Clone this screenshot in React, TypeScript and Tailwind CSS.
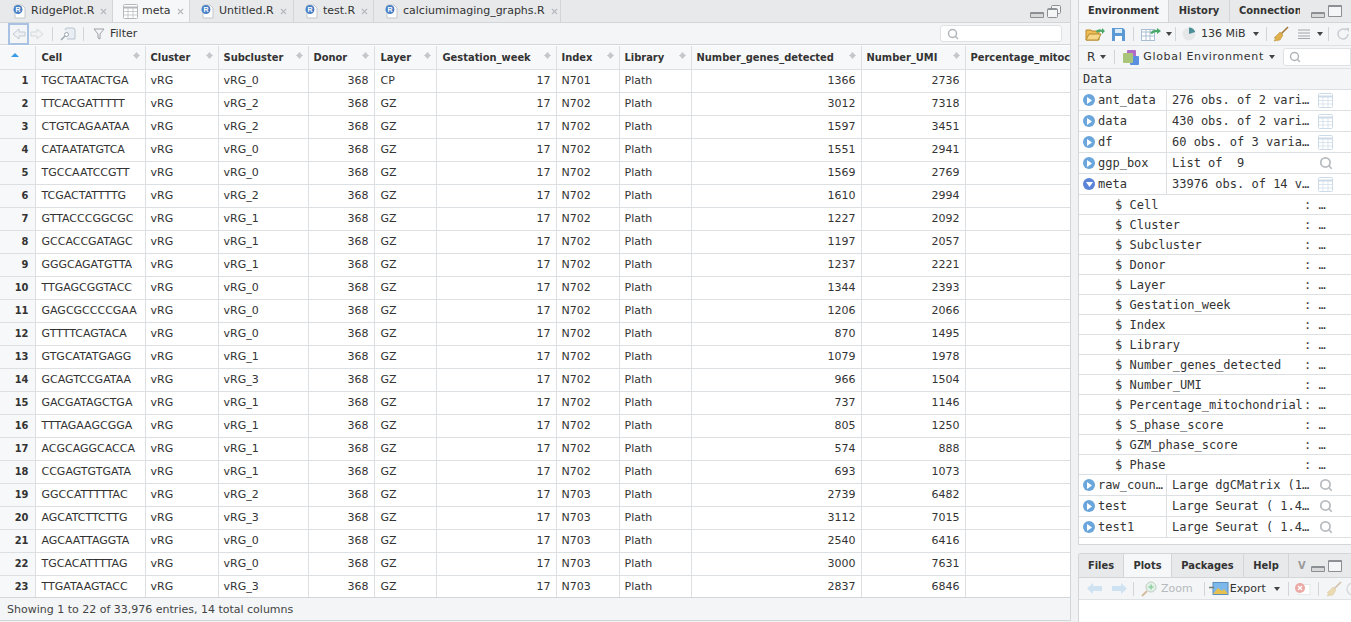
import React from 'react';
import { Search, X } from 'lucide-react';

const sans = "font-['DejaVu_Sans',sans-serif]";
const boldFont = "font-['DejaVu_Sans_Condensed','DejaVu_Sans',sans-serif] font-bold";

// cell, subcluster, index, genes, umi
const rows: [string, string, string, number, number][] = [
  ['TGCTAATACTGA', 'vRG_0', 'N701', 1366, 2736],
  ['TTCACGATTTTT', 'vRG_2', 'N702', 3012, 7318],
  ['CTGTCAGAATAA', 'vRG_2', 'N702', 1597, 3451],
  ['CATAATATGTCA', 'vRG_0', 'N702', 1551, 2941],
  ['TGCCAATCCGTT', 'vRG_0', 'N702', 1569, 2769],
  ['TCGACTATTTTG', 'vRG_2', 'N702', 1610, 2994],
  ['GTTACCCGGCGC', 'vRG_1', 'N702', 1227, 2092],
  ['GCCACCGATAGC', 'vRG_1', 'N702', 1197, 2057],
  ['GGGCAGATGTTA', 'vRG_1', 'N702', 1237, 2221],
  ['TTGAGCGGTACC', 'vRG_0', 'N702', 1344, 2393],
  ['GAGCGCCCCGAA', 'vRG_0', 'N702', 1206, 2066],
  ['GTTTTCAGTACA', 'vRG_0', 'N702', 870, 1495],
  ['GTGCATATGAGG', 'vRG_1', 'N702', 1079, 1978],
  ['GCAGTCCGATAA', 'vRG_3', 'N702', 966, 1504],
  ['GACGATAGCTGA', 'vRG_1', 'N702', 737, 1146],
  ['TTTAGAAGCGGA', 'vRG_1', 'N702', 805, 1250],
  ['ACGCAGGCACCA', 'vRG_1', 'N702', 574, 888],
  ['CCGAGTGTGATA', 'vRG_1', 'N702', 693, 1073],
  ['GGCCATTTTTAC', 'vRG_2', 'N703', 2739, 6482],
  ['AGCATCTTCTTG', 'vRG_3', 'N703', 3112, 7015],
  ['AGCAATTAGGTA', 'vRG_0', 'N703', 2540, 6416],
  ['TGCACATTTTAG', 'vRG_0', 'N703', 3000, 7631],
  ['TTGATAAGTACC', 'vRG_3', 'N703', 2837, 6846],
];

const columns: { label: string; w: number }[] = [
  { label: '', w: 35 },
  { label: 'Cell', w: 110 },
  { label: 'Cluster', w: 73 },
  { label: 'Subcluster', w: 90 },
  { label: 'Donor', w: 66 },
  { label: 'Layer', w: 62 },
  { label: 'Gestation_week', w: 120 },
  { label: 'Index', w: 63 },
  { label: 'Library', w: 72 },
  { label: 'Number_genes_detected', w: 170 },
  { label: 'Number_UMI', w: 104 },
  { label: 'Percentage_mitochondrial', w: 106 },
];

const RFile = () => (
  <svg width="15" height="15" viewBox="0 0 15 15" className="shrink-0">
    <path d="M3 1h7l3 3v10H3z" fill="#fff" stroke="#c4c8cc" />
    <circle cx="6" cy="5.5" r="4.5" fill="#4a80c4" />
    <text x="6" y="8" fontSize="7" fontWeight="700" textAnchor="middle" fill="#fff" fontFamily="Liberation Sans">R</text>
  </svg>
);

const GridIcon = ({ size = 15, color = '#cddbe8' }: { size?: number; color?: string }) => (
  <svg width={size} height={size} viewBox="0 0 15 15" className="shrink-0">
    <rect x="0.5" y="0.5" width="14" height="14" rx="1" fill="#fff" stroke={color} />
    <path d="M0.5 3.5h14" stroke={color} strokeWidth="2" />
    <path d="M5 4v10M10 4v10M1 7.5h13M1 11h13" stroke={color} strokeWidth="0.7" />
  </svg>
);

const Minimize = () => (
  <span className="w-[14px] h-[6px] mt-[7px] bg-[#d6d8da] border border-[#8c9094] rounded-[1px] border-t-[2px] shrink-0" />
);

const WinButtons = () => (
  <div className="flex items-center gap-[3px] shrink-0">
    <Minimize />
    <span className="w-[14px] h-[12px] bg-[#f4f5f6] border border-[#8c9094] border-t-[2px] rounded-[1px]" />
  </div>
);

const RestoreButtons = () => (
  <div className="flex items-center gap-[3px] shrink-0">
    <Minimize />
    <svg width="14" height="13" viewBox="0 0 14 13" className="shrink-0">
      <rect x="4.5" y="0.5" width="9" height="8" rx="1" fill="#f4f5f6" stroke="#8c9094" />
      <rect x="0.5" y="3.5" width="10" height="9" rx="1" fill="#f4f5f6" stroke="#8c9094" />
      <path d="M1 4.500h9" stroke="#8c9094" />
    </svg>
  </div>
);

const EditorTab = ({ name, w, active, grid, first }: { name: string; w: number; active?: boolean; grid?: boolean; first?: boolean }) => (
  <div
    className={`h-full flex items-center gap-[4px] border-r border-[#d3d6d9] shrink-0 ${first ? 'pl-[12px]' : 'pl-[10px]'} ${active ? 'bg-[#f6f7f8]' : ''}`}
    style={{ width: w }}
  >
    {grid ? <GridIcon color="#b4b8bc" /> : <RFile />}
    <span className="text-[11px] text-[#333] whitespace-nowrap pt-[1px]">{name}</span>
    <X size={9} className="text-[#b5b9bd] ml-[1px]" strokeWidth={3} />
  </div>
);

const Sorter = () => (
  <span className="flex flex-col -space-y-[1px] text-[#c4c8cc] shrink-0 mb-[6px]">
    <svg width="7" height="4" viewBox="0 0 7 4"><path d="M3.5 0 7 4H0z" fill="currentColor" /></svg>
    <svg width="7" height="4" viewBox="0 0 7 4"><path d="M0 0h7L3.5 4z" fill="currentColor" /></svg>
  </span>
);

const Table = () => (
  <table className="table-fixed border-collapse w-[1071px] text-[11px] text-[#333] [&_td]:pt-[2px] [&_th]:pt-[2px]">
    <colgroup>
      {columns.map(c => <col key={c.label} style={{ width: c.w }} />)}
    </colgroup>
    <thead>
      <tr className="h-[23px] bg-[#f7f8f9]">
        {columns.map((c, i) => (
          <th key={c.label} className={`border-r border-b border-[#dce0e3] pr-[5px] text-left overflow-hidden whitespace-nowrap ${i === 1 || i === 5 || i === 6 ? 'pl-[6px]' : 'pl-[5px]'} ${boldFont}`}>
            {i === 0 ? (
              <div className="flex justify-center pr-[4px] pb-[7px]">
                <svg width="8" height="4" viewBox="0 0 8 4"><path d="M4 0 8 4H0z" fill="#3a9be8" /></svg>
              </div>
            ) : i === 11 ? c.label : (
              <div className="flex items-center justify-between">
                <span>{c.label}</span>
                <Sorter />
              </div>
            )}
          </th>
        ))}
      </tr>
    </thead>
    <tbody>
      {rows.map((r, i) => (
        <tr key={r[0]} className="h-[23px] bg-white">
          <td className={`border-r border-b border-[#dce0e3] bg-[#f7f8f9] text-right pr-[6px] ${boldFont}`}>{i + 1}</td>
          <td className="border-r border-b border-[#dce0e3] pl-[6px] pr-[5px] overflow-hidden whitespace-nowrap">{r[0]}</td>
          <td className="border-r border-b border-[#dce0e3] px-[5px]">vRG</td>
          <td className="border-r border-b border-[#dce0e3] px-[5px]">{r[1]}</td>
          <td className="border-r border-b border-[#dce0e3] px-[5px] text-right">368</td>
          <td className="border-r border-b border-[#dce0e3] pl-[6px] pr-[5px]">{i === 0 ? 'CP' : 'GZ'}</td>
          <td className="border-r border-b border-[#dce0e3] px-[5px] text-right">17</td>
          <td className="border-r border-b border-[#dce0e3] px-[5px]">{r[2]}</td>
          <td className="border-r border-b border-[#dce0e3] px-[5px]">Plath</td>
          <td className="border-r border-b border-[#dce0e3] px-[5px] text-right">{r[3]}</td>
          <td className="border-r border-b border-[#dce0e3] px-[5px] text-right">{r[4]}</td>
          <td className="border-b border-[#dce0e3]" />
        </tr>
      ))}
    </tbody>
  </table>
);

const EnvRow = ({ name, value, icon, open }: { name: string; value: string; icon: 'grid' | 'search'; open?: boolean }) => (
  <div className="h-[21px] flex border-b border-[#dce0e3] bg-white font-['DejaVu_Sans_Mono',monospace] text-[12px] text-[#333] shrink-0">
    <div className="w-[88px] flex items-center gap-[3px] pl-[4px] border-r border-[#dce0e3] shrink-0 overflow-hidden">
      <span className={`w-[12px] h-[12px] rounded-full flex items-center justify-center shrink-0 ${open ? 'bg-[#5b84d8]' : 'bg-[#6aa6dc]'}`}>
        {open ? (
          <svg width="7" height="5" viewBox="0 0 7 5"><path d="M0 0h7L3.5 5z" fill="#fff" /></svg>
        ) : (
          <svg width="5" height="7" viewBox="0 0 5 7"><path d="M0 0l5 3.5L0 7z" fill="#fff" /></svg>
        )}
      </span>
      <span className="whitespace-nowrap">{name}</span>
    </div>
    <div className="flex items-center pl-[5px] whitespace-pre w-[150px] shrink-0 overflow-hidden">{value}</div>
    <div className="flex items-center justify-center w-[15px] ml-[1px]">
      {icon === 'grid' ? <GridIcon /> : <Search size={14} strokeWidth={3} className="text-[#b8bcc0]" />}
    </div>
  </div>
);

const VarRow = ({ name }: { name: string }) => (
  <div className="h-[20px] flex items-center border-b border-[#dce0e3] bg-white font-['DejaVu_Sans_Mono',monospace] text-[12px] text-[#333] pl-[36px] shrink-0 whitespace-pre">
    <span className="w-[189px] shrink-0">$ {name}</span>
    <span>: …</span>
  </div>
);

const Sep = ({ className = '' }: { className?: string }) => <span className={`w-px h-[14px] bg-[#d2d5d8] shrink-0 ${className}`} />;
const Caret = ({ className = '' }: { className?: string }) => (
  <svg width="6" height="4" viewBox="0 0 6 4" className={`shrink-0 ${className}`}><path d="M0 0h6L3 4z" fill="#444" /></svg>
);

const Broom = ({ faded, className = '' }: { faded?: boolean; className?: string }) => (
  <svg width="16" height="16" viewBox="0 0 16 16" className={`shrink-0 ${faded ? 'opacity-40' : ''} ${className}`}>
    <path d="M15 1 8 8" stroke="#a5763a" strokeWidth="1.6" />
    <path d="M7 6l3 3-3 5-6 1 2-3-2 0z" fill="#e0b04c" stroke="#b78a2e" strokeWidth="0.5" />
  </svg>
);

const varNames = ['Cell', 'Cluster', 'Subcluster', 'Donor', 'Layer', 'Gestation_week', 'Index', 'Library', 'Number_genes_detected', 'Number_UMI', 'Percentage_mitochondrial', 'S_phase_score', 'GZM_phase_score', 'Phase'];

export default function App() {
  return (
    <div className={`w-[1351px] h-[622px] flex bg-[#f0f2f4] overflow-hidden ${sans}`}>
      {/* Source pane */}
      <div className="w-[1071px] h-[621px] flex flex-col border-b border-r border-[#d3d6d9] shrink-0 overflow-hidden bg-white">
        <div className="h-[23px] flex bg-[#e7e9eb] border-b border-[#d3d6d9] shrink-0 items-stretch">
          <EditorTab name="RidgePlot.R" w={113} first />
          <EditorTab name="meta" w={77} active grid />
          <EditorTab name="Untitled.R" w={104} />
          <EditorTab name="test.R" w={80} />
          <EditorTab name="calciumimaging_graphs.R" w={187} />
          <div className="ml-auto mr-[9px] self-center"><RestoreButtons /></div>
        </div>
        <div className="h-[22px] flex items-center bg-[#f3f5f6] border-b border-[#d3d6d9] shrink-0">
          <div className="w-[21px] h-[22px] border-2 border-[#a9c1e3] flex items-center justify-center ml-[8px] shrink-0">
            <svg width="14" height="12" viewBox="0 0 14 12"><path d="M7 1 1 6l6 5V8h6V4H7z" fill="#eef1f4" stroke="#c3cbd3" /></svg>
          </div>
          <svg width="14" height="12" viewBox="0 0 14 12" className="ml-[1px] mr-[8px] shrink-0"><path d="M7 1l6 5-6 5V8H1V4h6z" fill="#f1f3f5" stroke="#d5dade" /></svg>
          <Sep />
          <svg width="16" height="14" viewBox="0 0 16 14" className="mx-[7px] shrink-0">
            <path d="M5 3q0-2 2-2h6q2 0 2 2v9H7" fill="#e8eef4" stroke="#b9c4ce" />
            <path d="M1 13l4-4" stroke="#9aa5af" strokeWidth="1.5" /><circle cx="6.5" cy="7.5" r="2" fill="#fff" stroke="#9aa5af" />
          </svg>
          <Sep />
          <svg width="12" height="12" viewBox="0 0 12 12" className="ml-[9px] mr-[5px] shrink-0"><path d="M1 1h10L7 6v5L5 10V6z" fill="none" stroke="#9ba1a7" /></svg>
          <span className="text-[11px] text-[#333] pt-[1px]">Filter</span>
          <div className="ml-auto mr-[8px] w-[122px] h-[17px] bg-white border border-[#dfe2e5] rounded-[3px] flex items-center pl-[6px]">
            <Search size={12} strokeWidth={3} className="text-[#b0b5ba]" />
          </div>
        </div>
        <div className="h-[552px] overflow-hidden shrink-0 bg-white pt-[1px]"><Table /></div>
        <div className="flex-1 flex items-center pl-[7px] pt-[2px] bg-[#f3f5f6] border-t border-[#d3d6d9] text-[11px] text-[#444]">
          Showing 1 to 22 of 33,976 entries, 14 total columns
        </div>
      </div>

      <div className="w-[7px] shrink-0" />

      {/* Right column */}
      <div className="w-[273px] shrink-0 flex flex-col overflow-hidden">
        <div className="h-[545px] flex flex-col border-l border-b border-[#d3d6d9] bg-white shrink-0 overflow-hidden">
          <div className={`h-[23px] flex items-stretch bg-[#e7e9eb] border-b border-[#d3d6d9] shrink-0 text-[11px] text-[#333] ${boldFont}`}>
            <div className="w-[90px] flex items-center justify-center pt-[1px] bg-[#f6f7f8] border-r border-[#d3d6d9]">Environment</div>
            <div className="w-[61px] flex items-center justify-center pt-[1px] border-r border-[#d3d6d9]">History</div>
            <div className="w-[70px] flex items-center pl-[9px] pt-[1px] overflow-hidden whitespace-nowrap">Connection</div>
            <div className="ml-auto mr-[9px] self-center"><WinButtons /></div>
          </div>
          <div className="h-[23px] flex items-center bg-[#f3f5f6] border-b border-[#dfe2e5] pl-[6px] shrink-0 overflow-hidden text-[11px] text-[#333]">
            <svg width="20" height="14" viewBox="0 0 20 14" className="shrink-0">
              <path d="M1 3h5l1 1h7v9H1z" fill="#eebd55" stroke="#b68a2d" />
              <path d="M1 13l3-6h12l-3 6z" fill="#f7d88a" stroke="#b68a2d" />
              <path d="M11 4q3-3 6-1V1l3 3-3 3V5q-3-1-5 1z" fill="#4aa86a" />
            </svg>
            <svg width="13" height="13" viewBox="0 0 13 13" className="ml-[7px] shrink-0">
              <path d="M0 0h11l2 2v11H0z" fill="#5b9ad4" />
              <rect x="3" y="1" width="7" height="4" fill="#dcebf8" />
              <rect x="3" y="8" width="7" height="5" fill="#fff" />
            </svg>
            <Sep className="ml-[8px]" />
            <svg width="20" height="14" viewBox="0 0 20 14" className="ml-[7px] shrink-0">
              <rect x="0.5" y="2.5" width="13" height="11" fill="#fff" stroke="#a8bed2" />
              <path d="M0 5h14M5 3v10M9 3v10M1 9h13" stroke="#a8bed2" />
              <path d="M9 6q3-4 7-3V1l4 3-4 3V5q-3 0-5 2z" fill="#4aa86a" />
            </svg>
            <Caret className="ml-[5px]" />
            <Sep className="ml-[3px]" />
            <svg width="14" height="14" viewBox="0 0 14 14" className="ml-[6px] shrink-0">
              <circle cx="7" cy="7" r="6.5" fill="#e6e7e8" />
              <path d="M7 7V.5A6.5 6.5 0 0 1 13.2 5z" fill="#4d8f96" />
            </svg>
            <span className="whitespace-nowrap ml-[5px]">136 MiB</span>
            <Caret className="ml-[7px]" />
            <Sep className="ml-[7px]" />
            <Broom className="ml-[6px]" />
            <svg width="12" height="10" viewBox="0 0 12 10" className="ml-[9px] shrink-0"><path d="M0 1h12M0 4h12M0 7h12M0 9.500h12" stroke="#a3a7ab" /></svg>
            <Caret className="ml-[7px]" />
            <Sep className="ml-[5px]" />
            <svg width="14" height="14" viewBox="0 0 14 14" fill="none" className="ml-[7px] shrink-0"><path d="M12 7a5 5 0 1 1-2-4" stroke="#c9ced3" strokeWidth="1.5" /><path d="M9 1h4v4z" fill="#c9ced3" /></svg>
          </div>
          <div className="h-[23px] flex items-center bg-[#f3f5f6] border-b border-[#dfe2e5] pl-[8px] shrink-0 text-[12px] text-[#333]">
            <span>R</span>
            <Caret className="ml-[5px] mr-[8px]" />
            <Sep />
            <svg width="16" height="15" viewBox="0 0 16 15" className="ml-[8px] mr-[4px] shrink-0">
              <rect x="4" y="0" width="9" height="9" rx="1" fill="#b06cc8" />
              <rect x="7" y="6" width="9" height="9" rx="1" fill="#5b8fe0" />
              <rect x="0" y="3" width="10" height="10" rx="1" fill="#a9c57a" />
            </svg>
            <span className="whitespace-nowrap text-[11px] tracking-[0.65px]">Global Environment</span>
            <Caret className="ml-[5px] mr-[8px]" />
            <div className="flex-1 h-[18px] bg-white border border-[#dfe2e5] rounded-l-[3px] flex items-center pl-[5px]">
              <Search size={12} strokeWidth={3} className="text-[#b0b5ba]" />
            </div>
          </div>
          <div className="h-[21px] flex items-center pl-[4px] bg-[#f3f5f6] border-b border-[#dce0e3] font-['DejaVu_Sans_Mono',monospace] text-[12px] text-[#333] shrink-0">Data</div>
          <EnvRow name="ant_data" value="276 obs. of 2 vari…" icon="grid" />
          <EnvRow name="data" value="430 obs. of 2 vari…" icon="grid" />
          <EnvRow name="df" value="60 obs. of 3 varia…" icon="grid" />
          <EnvRow name="ggp_box" value="List of  9" icon="search" />
          <EnvRow name="meta" value="33976 obs. of 14 v…" icon="grid" open />
          {varNames.map(n => <VarRow key={n} name={n} />)}
          <EnvRow name="raw_coun…" value="Large dgCMatrix (1…" icon="search" />
          <EnvRow name="test" value="Large Seurat ( 1.4…" icon="search" />
          <EnvRow name="test1" value="Large Seurat ( 1.4…" icon="search" />
        </div>

        <div className="h-[8px] shrink-0" />

        <div className="flex-1 flex flex-col border-l border-t border-[#d3d6d9] rounded-tl-[3px] bg-white overflow-hidden">
          <div className={`h-[24px] flex bg-[#e7e9eb] border-b border-[#d3d6d9] shrink-0 text-[11px] text-[#333] ${boldFont}`}>
            <div className="w-[45px] flex items-center justify-center pt-[1px] border-r border-[#d3d6d9]">Files</div>
            <div className="w-[48px] flex items-center justify-center pt-[1px] bg-[#f6f7f8] border-r border-[#d3d6d9]">Plots</div>
            <div className="w-[72px] flex items-center justify-center pt-[1px] border-r border-[#d3d6d9]">Packages</div>
            <div className="w-[45px] flex items-center justify-center pt-[1px] border-r border-[#d3d6d9]">Help</div>
            <div className="w-[20px] flex items-center pl-[9px] pt-[1px] overflow-hidden text-[#999]">V</div>
            <div className="ml-auto mr-[9px] self-center"><WinButtons /></div>
          </div>
          <div className="h-[22px] flex items-center bg-[#f3f5f6] border-b border-[#dfe2e5] pl-[8px] shrink-0 text-[11px] overflow-hidden">
            <svg width="15" height="11" viewBox="0 0 15 11" className="shrink-0"><path d="M6 0 0 5.500 6 11V8h9V3H6z" fill="#cfe2f2" /></svg>
            <svg width="15" height="11" viewBox="0 0 15 11" className="ml-[10px] shrink-0"><path d="M9 0l6 5.500L9 11V8H0V3h9z" fill="#cfe2f2" /></svg>
            <Sep className="ml-[6px]" />
            <svg width="16" height="16" viewBox="0 0 16 16" className="ml-[7px] shrink-0">
              <circle cx="10" cy="6" r="5" fill="#e3f2e6" stroke="#c3ccc5" />
              <path d="M10 3.500v5M7.500 6h5" stroke="#8fcfa5" strokeWidth="1.5" />
              <path d="M6 10l-5 5" stroke="#d4bda0" strokeWidth="2" />
            </svg>
            <span className="text-[#b6babd] ml-[4px] pt-[1px]">Zoom</span>
            <Sep className="ml-[11px]" />
            <svg width="20" height="13" viewBox="0 0 20 13" className="ml-[4px] shrink-0">
              <rect x="4" y="0.500" width="15" height="12" fill="#7cb8ea" stroke="#5b8fc0" />
              <path d="M4 12l5-6 4 3 2-2 4 5z" fill="#e8c050" />
              <path d="M0 5.500h5" stroke="#777" strokeWidth="1.5" />
            </svg>
            <span className="text-[#333] ml-[1px] pt-[1px]">Export</span>
            <Caret className="ml-[8px]" />
            <Sep className="ml-[8px]" />
            <svg width="17" height="13" viewBox="0 0 17 13" className="ml-[5px] shrink-0">
              <rect x="4" y="2.500" width="12" height="10" fill="#fff" stroke="#e6e8ea" />
              <circle cx="6" cy="6" r="5" fill="#eba8a4" />
              <path d="M4 4l4 4M8 4l-4 4" stroke="#fff" strokeWidth="1.3" />
            </svg>
            <Sep className="ml-[7px]" />
            <Broom faded className="ml-[7px]" />
            <svg width="12" height="14" viewBox="0 0 12 14" fill="none" className="ml-[4px] shrink-0"><circle cx="7" cy="7" r="6" stroke="#d8dcdf" strokeWidth="1.5" /></svg>
          </div>
          <div className="flex-1 bg-white" />
        </div>
      </div>
    </div>
  );
}
